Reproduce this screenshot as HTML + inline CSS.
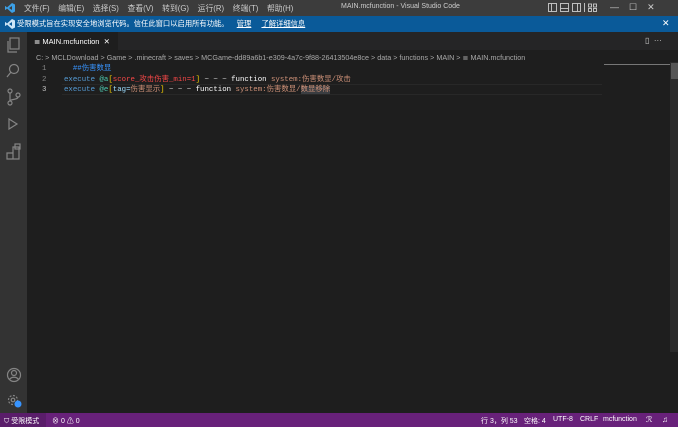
<!DOCTYPE html>
<html><head><meta charset="utf-8"><style>
*{margin:0;padding:0;box-sizing:border-box}
body{width:678px;height:427px;overflow:hidden;background:#1e1e1e;font-family:"Liberation Sans","Noto Sans CJK SC",sans-serif;font-size:8px;color:#ccc;position:relative}
.abs{position:absolute}
#title{top:0;left:0;width:678px;height:16px;background:#3c3c3c}
#banner{top:16px;left:0;width:678px;height:16px;background:#0a5a99;color:#fff}
#act{top:32px;left:0;width:27px;height:381px;background:#333}
#tabs{top:32px;left:27px;width:651px;height:18px;background:#252526}
#tab{top:32px;left:27px;width:91px;height:18px;background:#1e1e1e;color:#fff}
#status{top:413px;left:0;width:678px;height:14px;background:#68217a;color:#fff}
.mono{font-family:"Liberation Mono","Noto Sans CJK SC",monospace;font-size:7.4px;white-space:pre}
.t{white-space:nowrap}
</style></head><body>
<div id="title" class="abs">
 <svg class="abs" style="left:5px;top:3px" width="10" height="10" viewBox="0 0 10 10"><path d="M7 0L10 1.5V8.5L7 10L2 5.5L0.5 7L0 6.5V3.5L0.5 3L2 4.5ZM7 3L4 5L7 7Z" fill="#3ca0e6"/></svg>
 <div class="abs t" style="left:24px;top:3px;color:#ccc;font-size:7.8px">文件(F)&nbsp;&nbsp;&nbsp;&nbsp;编辑(E)&nbsp;&nbsp;&nbsp;&nbsp;选择(S)&nbsp;&nbsp;&nbsp;&nbsp;查看(V)&nbsp;&nbsp;&nbsp;&nbsp;转到(G)&nbsp;&nbsp;&nbsp;&nbsp;运行(R)&nbsp;&nbsp;&nbsp;&nbsp;终端(T)&nbsp;&nbsp;&nbsp;&nbsp;帮助(H)</div>
 <div class="abs t" style="left:341px;top:3px;font-size:7px">MAIN.mcfunction - Visual Studio Code</div>
 <svg class="abs" style="left:548px;top:3px" width="52" height="10" fill="none" stroke="#ccc" stroke-width="0.9">
  <rect x="0.5" y="0.5" width="8" height="8"/><path d="M3.5 0.5v8"/>
  <rect x="12.5" y="0.5" width="8" height="8"/><path d="M12.5 5.5h8"/>
  <rect x="24.5" y="0.5" width="8" height="8"/><path d="M29.5 0.5v8"/>
  <path d="M36.5 0v9"/><rect x="40.5" y="1" width="3" height="3"/><rect x="45.5" y="1" width="3" height="3"/><rect x="40.5" y="5.5" width="3" height="3"/><rect x="45.5" y="5.5" width="3" height="3"/>
 </svg>
 <div class="abs t" style="left:610px;top:2px;font-size:9px">—&nbsp;&nbsp;&nbsp;&nbsp;☐&nbsp;&nbsp;&nbsp;&nbsp;✕</div>
</div>
<div id="banner" class="abs">
 <svg class="abs" style="left:5px;top:3px" width="10" height="10" viewBox="0 0 10 10"><path d="M7 0L10 1.5V8.5L7 10L2 5.5L0.5 7L0 6.5V3.5L0.5 3L2 4.5ZM7 3L4 5L7 7Z" fill="#cfe6f7"/></svg>
 <div class="abs t" style="left:17px;top:3px;font-size:7.3px">受限模式旨在实现安全地浏览代码。信任此窗口以启用所有功能。&nbsp;&nbsp;&nbsp;&nbsp;<u>管理</u>&nbsp;&nbsp;&nbsp;&nbsp;&nbsp;<u>了解详细信息</u></div>
 <div class="abs" style="left:662px;top:2px;font-size:9px">✕</div>
</div>
<div id="act" class="abs">
 <svg class="abs" style="left:6px;top:5px" width="15" height="130" fill="none" stroke="#858585" stroke-width="1.2">
  <rect x="4" y="1" width="9" height="11"/><path d="M2 4v11h9"/>
  <circle cx="8" cy="32" r="4.5"/><path d="M5 35l-4 5"/>
  <circle cx="4" cy="54" r="2"/><circle cx="4" cy="66" r="2"/><circle cx="12" cy="58" r="2"/><path d="M4 56v8M12 60c0 3-8 2-8 4"/>
  <path d="M3 82l8 5-8 5z"/>
  <path d="M1 122h12v-12h-6v6h-6zM1 116h6M7 116v6"/><rect x="9" y="107" width="5" height="5"/>
 </svg>
 <svg class="abs" style="left:6px;top:335px" width="16" height="42" fill="none" stroke="#858585" stroke-width="1.2">
  <circle cx="8" cy="8" r="6.5"/><circle cx="8" cy="6" r="2.5"/><path d="M3.5 12.5c2-3 7-3 9 0"/>
  <circle cx="7" cy="33" r="4.5" stroke-dasharray="2 1.5"/><circle cx="7" cy="33" r="1.8"/>
  <circle cx="12" cy="37" r="3.5" fill="#3794ff" stroke="none"/>
 </svg>
</div>
<div id="tabs" class="abs"></div>
<div id="tab" class="abs"><div class="abs t" style="left:7px;top:5px;font-size:7.5px">≣ MAIN.mcfunction&nbsp;&nbsp;✕</div></div>
<div class="abs t" style="left:645px;top:36px;font-size:8px">▯&nbsp;&nbsp;···</div>
<div class="abs t" style="left:36px;top:53px;font-size:7.2px;color:#a9a9a9">C: &gt; MCLDownload &gt; Game &gt; .minecraft &gt; saves &gt; MCGame-dd89a6b1-e309-4a7c-9f88-26413504e8ce &gt; data &gt; functions &gt; MAIN &gt; ≣ MAIN.mcfunction</div>
<div class="abs mono" style="left:42px;top:64px;line-height:10.5px;color:#858585">1
2
<span style="color:#c6c6c6">3</span></div>
<div class="abs" style="left:62px;top:84px;width:540px;height:11px;border-top:1px solid #282828;border-bottom:1px solid #282828"></div>
<div class="abs mono" style="left:64px;top:64px;line-height:10.5px;color:#d4d4d4">  <span style="color:#3794ff">##伤害数显</span>
<span style="color:#569cd6">execute</span> <span style="color:#4ec9b0">@a</span><span style="color:#ffd700">[</span><span style="color:#f44747">score_攻击伤害_min=1</span><span style="color:#ffd700">]</span> ~ ~ ~ <span style="color:#fff">function</span> <span style="color:#ce9178">system:伤害数显/攻击</span>
<span style="color:#569cd6">execute</span> <span style="color:#4ec9b0">@e</span><span style="color:#ffd700">[</span><span style="color:#9cdcfe">tag=</span><span style="color:#ce9178">伤害显示</span><span style="color:#ffd700">]</span> ~ ~ ~ <span style="color:#fff">function</span> <span style="color:#ce9178">system:伤害数显/<span style="background:#3a3d41">数显移除</span></span></div>
<div class="abs" style="left:604px;top:64px;width:66px;height:1px;background:#777"></div>
<div class="abs" style="left:670px;top:62px;width:8px;height:290px;background:#2a2a2a"></div>
<div class="abs" style="left:671px;top:63px;width:7px;height:16px;background:#555"></div>
<div id="status" class="abs">
 <div class="abs" style="left:0;top:0;width:46px;height:14px;background:#5a1d6a"></div>
 <div class="abs t" style="left:4px;top:3px;font-size:7px">⛉ 受限模式</div>
 <div class="abs t" style="left:52px;top:3px;font-size:7px">⊗ 0 ⚠ 0</div>
 <div class="abs t" style="left:481px;top:3px;font-size:7px">行 3，列 53</div>
 <div class="abs t" style="left:524px;top:3px;font-size:7px">空格: 4</div>
 <div class="abs t" style="left:553px;top:3px;font-size:7px">UTF-8</div>
 <div class="abs t" style="left:580px;top:3px;font-size:7px">CRLF</div>
 <div class="abs t" style="left:603px;top:3px;font-size:7px">mcfunction</div>
 <div class="abs t" style="left:646px;top:2px;font-size:8px">ℛ</div>
 <div class="abs t" style="left:662px;top:2px;font-size:8px">♫</div>
</div>
</body></html>
